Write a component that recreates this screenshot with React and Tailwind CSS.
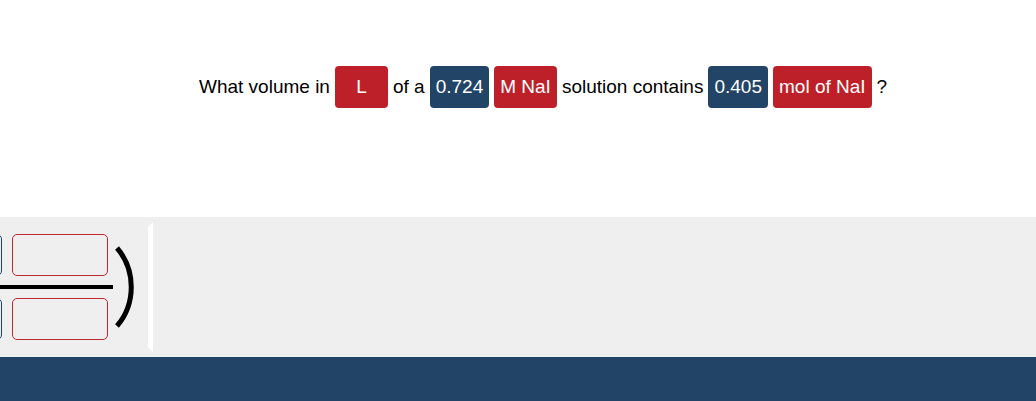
import React from "react";

const font = { fontFamily: '"Liberation Sans", Arial, sans-serif' };

function Badge({ children, color, className = "" }) {
  return (
    <span
      className={`flex h-[42px] items-center justify-center rounded-[4px] px-[6px] text-white ${color} ${className}`}
    >
      {children}
    </span>
  );
}

export default function App() {
  return (
    <div className="w-[1036px] h-[401px] overflow-hidden bg-white" style={font}>
      <div className="h-[217px] pt-[66px] pl-[199px]">
        <div className="flex items-center gap-[5px] text-[19px] text-black">
          <span>What volume in</span>
          <Badge color="bg-[#be2029]" className="w-[53px]">L</Badge>
          <span>of a</span>
          <Badge color="bg-[#224466]">0.724</Badge>
          <Badge color="bg-[#be2029]">M NaI</Badge>
          <span>solution contains</span>
          <Badge color="bg-[#224466]">0.405</Badge>
          <Badge color="bg-[#be2029]">mol of NaI</Badge>
          <span>?</span>
        </div>
      </div>
      <div className="flex h-[140px] bg-[#efefef] overflow-hidden">
        <div className="flex items-center">
          <div className="ml-[-99px] flex w-[212px] flex-col">
            <div className="flex gap-[10px] px-[5px]">
              <div className="h-[42px] w-[96px] rounded-[5px] border border-[#224466]" />
              <div className="h-[42px] w-[96px] rounded-[5px] border border-[#c0282f]" />
            </div>
            <div className="mt-[9px] h-[4px] w-full bg-black" />
            <div className="mt-[9px] flex gap-[10px] px-[5px]">
              <div className="h-[42px] w-[96px] rounded-[5px] border border-[#224466]" />
              <div className="h-[42px] w-[96px] rounded-[5px] border border-[#c0282f]" />
            </div>
          </div>
          <svg width="22" height="84" viewBox="0 0 22 84" className="ml-[1px]">
            <path d="M3 3 C22 25, 22 59, 3 81" fill="none" stroke="black" strokeWidth="5" />
          </svg>
        </div>
        <div className="ml-[12px] my-[5px] w-[5px] bg-white [clip-path:polygon(0_5px,100%_0,100%_100%,0_calc(100%-5px))]" />
      </div>
      <div className="h-[44px] bg-[#224466]" />
    </div>
  );
}
